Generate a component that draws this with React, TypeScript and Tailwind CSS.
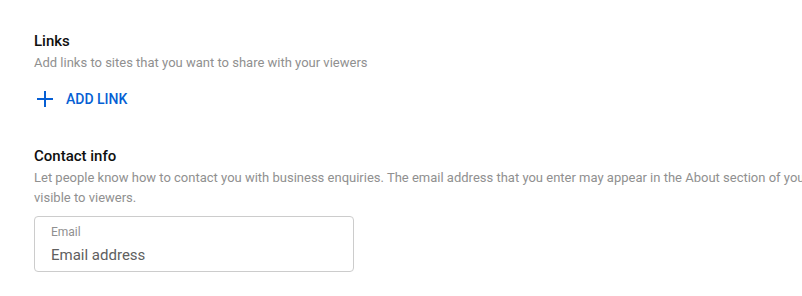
export default function App() {
  return (
    <div className="h-[296px] w-[802px] overflow-hidden bg-white font-['Roboto',sans-serif]">
      <div className="w-[900px] pl-[34px] pt-[29px]">
        {/* Links */}
        <section>
          <h2 className="text-[15px] font-medium leading-6 text-[#0f0f0f]">Links</h2>
          <p className="text-[13px] leading-5 text-[#909090]">
            Add links to sites that you want to share with your viewers
          </p>
          <button className="mt-[8px] flex h-9 items-center gap-[9px] text-[14px] font-medium text-[#065fd4]">
            <svg width="24" height="24" viewBox="0 0 24 24" className="-ml-[1px]">
              <path d="M4.5 11h7V4h2v7h7v2h-7v7h-2v-7h-7z" fill="#065fd4" transform="translate(-0.5 0)" />
            </svg>
            ADD LINK
          </button>
        </section>

        {/* Contact info */}
        <section className="mt-[27px]">
          <h2 className="text-[15px] font-medium leading-6 text-[#0f0f0f]">Contact info</h2>
          <p className="text-[13px] leading-5 text-[#909090]">
            Let people know how to contact you with business enquiries. The email address that you enter may appear in the About section of your channel and be visible to viewers.
          </p>
          <div className="mt-[8px] flex h-14 w-80 flex-col rounded border border-[#cccccc] px-[16px] pt-[7px]">
            <span className="text-[12px] leading-4 text-[#909090]">Email</span>
            <span className="mt-[3px] text-[15px] leading-6 text-[#606060]">Email address</span>
          </div>
        </section>
      </div>
    </div>
  );
}
